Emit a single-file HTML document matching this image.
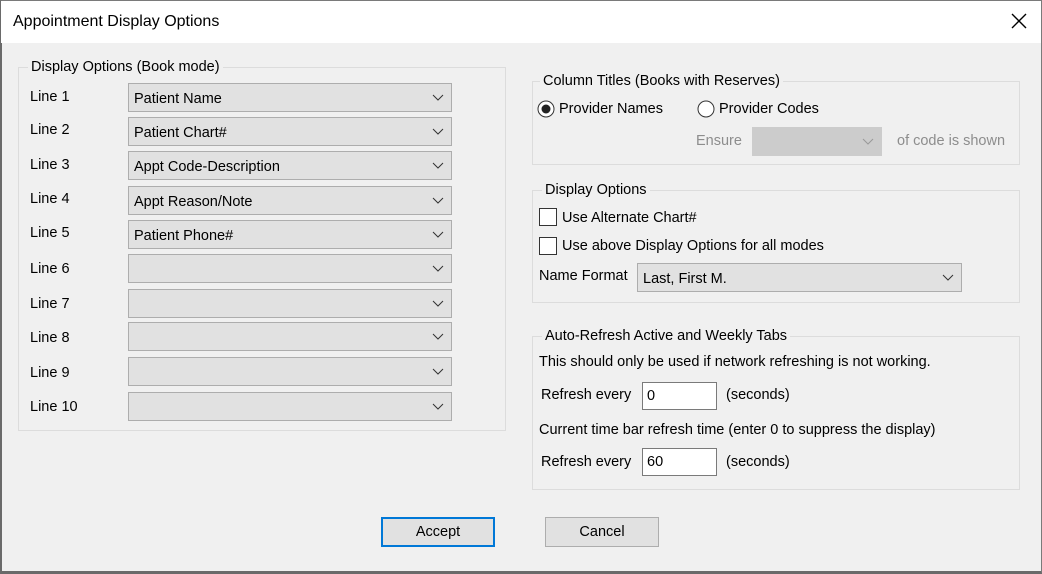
<!DOCTYPE html>
<html><head><style>
*{box-sizing:border-box;margin:0;padding:0}
body{width:1042px;height:574px;background:#f0f0f0;font-family:"Liberation Sans",sans-serif;font-size:14.5px;color:#000;position:relative;overflow:hidden}
.frame{position:absolute;left:0;top:0;width:1042px;height:574px;border:1px solid #7a7a7a;border-left:2px solid #6a6a6a;border-bottom:3px solid #6a6a6a}
.title{position:absolute;left:1px;top:1px;width:1040px;height:42px;background:#fff}
.a{position:absolute;white-space:nowrap}
.gb{position:absolute;border:1px solid #dcdcdc}
.lg{position:absolute;background:#f0f0f0;padding:0 3px;white-space:nowrap;line-height:18px}
.cb{position:absolute;background:#e1e1e1;border:1px solid #adadad;height:29px;line-height:30px;padding-left:5px}
.cb svg{position:absolute;right:7px;top:10px}
.tb{position:absolute;background:#fff;border:1px solid #7a7a7a;height:28px;line-height:26px;padding-left:4px}
.chk{position:absolute;width:18px;height:18px;border:1px solid #333;background:#fff}
.btn{position:absolute;width:114px;height:30px;background:#e1e1e1;border:1px solid #adadad;text-align:center;line-height:28px}
.gray{color:#8d8d8d}
</style></head><body>
<div class="frame"></div>
<div class="title"></div>
<div class="a" style="left:13px;top:13px;font-size:16px">Appointment Display Options</div>
<svg class="a" style="left:1011px;top:13px" width="16" height="16"><path d="M1 1L15 15M15 1L1 15" stroke="#000" stroke-width="1.4"/></svg>

<div class="gb" style="left:18px;top:67px;width:488px;height:364px"></div>
<div class="lg" style="left:28px;top:58px">Display Options (Book mode)</div>

<div class="a" style="left:30px;top:89px">Line 1</div>
<div class="cb" style="left:128px;top:83px;width:324px">Patient Name<svg width="12" height="8"><path d="M1 1L6 6L11 1" stroke="#333" fill="none"/></svg></div>
<div class="a" style="left:30px;top:122px">Line 2</div>
<div class="cb" style="left:128px;top:117px;width:324px">Patient Chart#<svg width="12" height="8"><path d="M1 1L6 6L11 1" stroke="#333" fill="none"/></svg></div>
<div class="a" style="left:30px;top:157px">Line 3</div>
<div class="cb" style="left:128px;top:151px;width:324px">Appt Code-Description<svg width="12" height="8"><path d="M1 1L6 6L11 1" stroke="#333" fill="none"/></svg></div>
<div class="a" style="left:30px;top:191px">Line 4</div>
<div class="cb" style="left:128px;top:186px;width:324px">Appt Reason/Note<svg width="12" height="8"><path d="M1 1L6 6L11 1" stroke="#333" fill="none"/></svg></div>
<div class="a" style="left:30px;top:225px">Line 5</div>
<div class="cb" style="left:128px;top:220px;width:324px">Patient Phone#<svg width="12" height="8"><path d="M1 1L6 6L11 1" stroke="#333" fill="none"/></svg></div>
<div class="a" style="left:30px;top:261px">Line 6</div>
<div class="cb" style="left:128px;top:254px;width:324px"><svg width="12" height="8"><path d="M1 1L6 6L11 1" stroke="#333" fill="none"/></svg></div>
<div class="a" style="left:30px;top:296px">Line 7</div>
<div class="cb" style="left:128px;top:289px;width:324px"><svg width="12" height="8"><path d="M1 1L6 6L11 1" stroke="#333" fill="none"/></svg></div>
<div class="a" style="left:30px;top:330px">Line 8</div>
<div class="cb" style="left:128px;top:322px;width:324px"><svg width="12" height="8"><path d="M1 1L6 6L11 1" stroke="#333" fill="none"/></svg></div>
<div class="a" style="left:30px;top:365px">Line 9</div>
<div class="cb" style="left:128px;top:357px;width:324px"><svg width="12" height="8"><path d="M1 1L6 6L11 1" stroke="#333" fill="none"/></svg></div>
<div class="a" style="left:30px;top:399px">Line 10</div>
<div class="cb" style="left:128px;top:392px;width:324px"><svg width="12" height="8"><path d="M1 1L6 6L11 1" stroke="#333" fill="none"/></svg></div>

<div class="gb" style="left:532px;top:81px;width:488px;height:84px"></div>
<div class="lg" style="left:540px;top:72px">Column Titles (Books with Reserves)</div>
<svg class="a" style="left:537px;top:100px" width="18" height="18"><circle cx="9" cy="9" r="8" fill="#fff" stroke="#333"/><circle cx="9" cy="9" r="4.5" fill="#222"/></svg>
<div class="a" style="left:559px;top:101px">Provider Names</div>
<svg class="a" style="left:697px;top:100px" width="18" height="18"><circle cx="9" cy="9" r="8" fill="#fff" stroke="#333"/></svg>
<div class="a" style="left:719px;top:101px">Provider Codes</div>
<div class="a gray" style="left:696px;top:133px">Ensure</div>
<div class="cb" style="left:752px;top:127px;width:130px;background:#ccc;border-color:#ccc"><svg width="12" height="8"><path d="M1 1L6 6L11 1" stroke="#999" fill="none"/></svg></div>
<div class="a gray" style="left:897px;top:133px">of code is shown</div>

<div class="gb" style="left:532px;top:190px;width:488px;height:113px"></div>
<div class="lg" style="left:542px;top:181px">Display Options</div>
<div class="chk" style="left:539px;top:208px"></div>
<div class="a" style="left:562px;top:210px">Use Alternate Chart#</div>
<div class="chk" style="left:539px;top:237px"></div>
<div class="a" style="left:562px;top:238px">Use above Display Options for all modes</div>
<div class="a" style="left:539px;top:268px">Name Format</div>
<div class="cb" style="left:637px;top:263px;width:325px">Last, First M.<svg width="12" height="8"><path d="M1 1L6 6L11 1" stroke="#333" fill="none"/></svg></div>

<div class="gb" style="left:532px;top:336px;width:488px;height:154px"></div>
<div class="lg" style="left:542px;top:327px">Auto-Refresh Active and Weekly Tabs</div>
<div class="a" style="left:539px;top:354px">This should only be used if network refreshing is not working.</div>
<div class="a" style="left:541px;top:387px">Refresh every</div>
<div class="tb" style="left:642px;top:382px;width:75px">0</div>
<div class="a" style="left:726px;top:387px">(seconds)</div>
<div class="a" style="left:539px;top:422px">Current time bar refresh time (enter 0 to suppress the display)</div>
<div class="a" style="left:541px;top:454px">Refresh every</div>
<div class="tb" style="left:642px;top:448px;width:75px">60</div>
<div class="a" style="left:726px;top:454px">(seconds)</div>

<div class="btn" style="left:381px;top:517px;border:2px solid #0078d7;line-height:26px">Accept</div>
<div class="btn" style="left:545px;top:517px">Cancel</div>
</body></html>
